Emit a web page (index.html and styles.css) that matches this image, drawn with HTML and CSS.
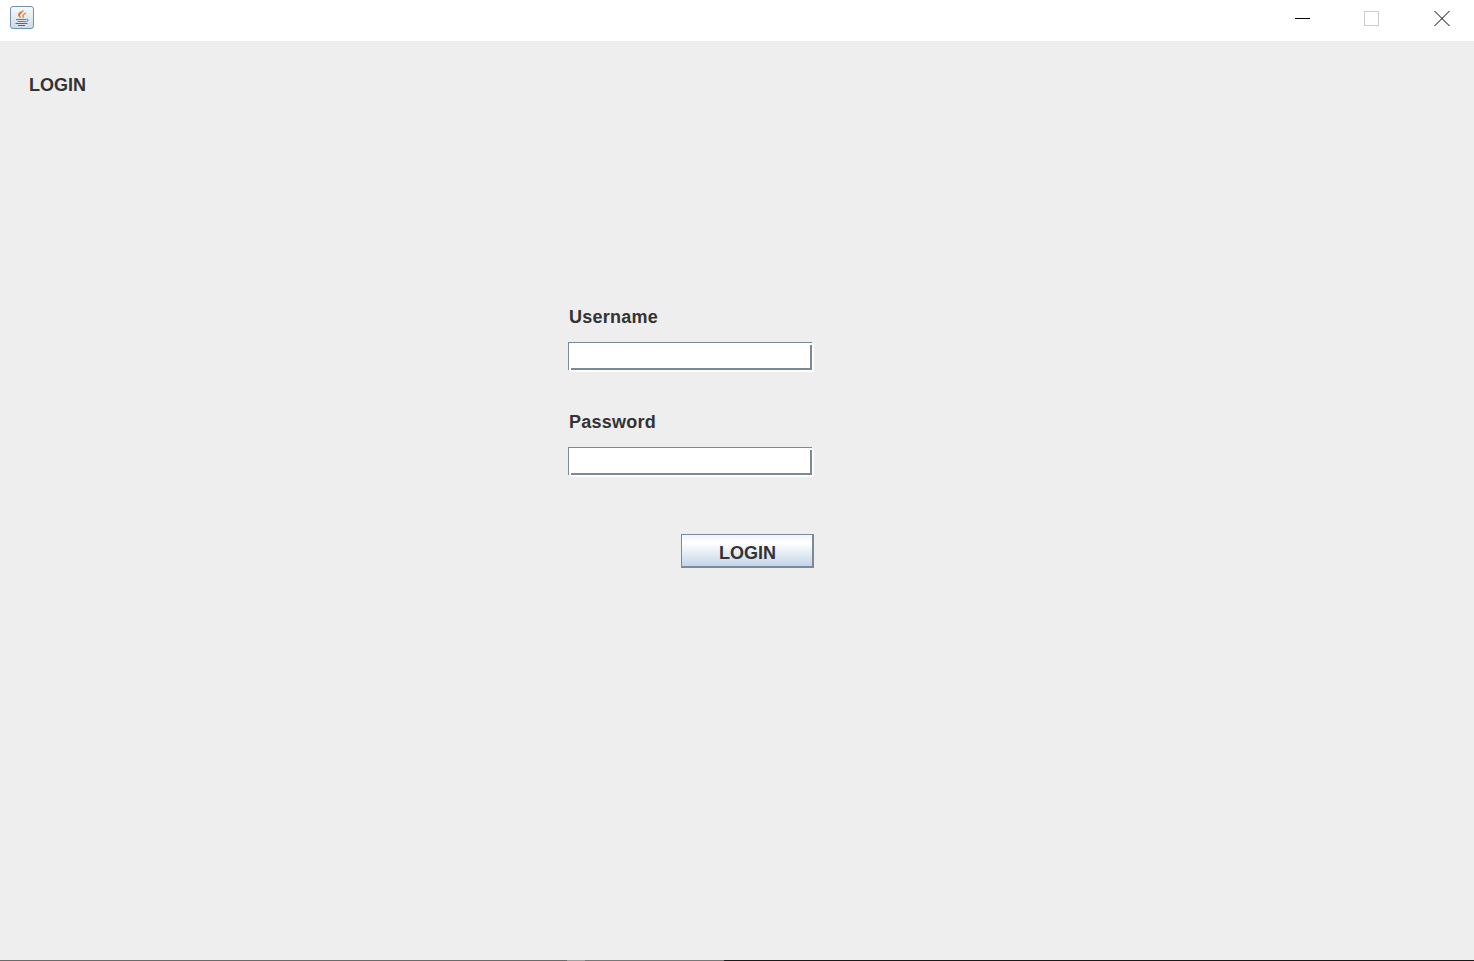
FILE: index.html
```html
<!DOCTYPE html>
<html lang="en">
<head>
    <meta charset="UTF-8">
    <title>Login</title>
    <link rel="stylesheet" href="styles.css">
</head>
<body>
    <!-- Title Bar -->
    <div class="title-bar">
        <svg class="app-icon" width="24" height="23" viewBox="0 0 24 23">
            <defs>
                <linearGradient id="icon-bg" x1="0" y1="0" x2="0" y2="1">
                    <stop offset="0" stop-color="#f8fafc"/>
                    <stop offset="1" stop-color="#cfdbe6"/>
                </linearGradient>
            </defs>
            <rect x="0.5" y="0.5" width="23" height="22" rx="2.5" fill="url(#icon-bg)" stroke="#6f93ad"/>
            <path d="M13.500 3.500c1 2.500-4 3.800-3.300 6.500.2.900.8 1.600 1.400 2.500-2.500-1-4.200-2.800-3.400-5 .8-1.800 4.300-2 5.300-4z" fill="#e5762a"/>
            <path d="M16 7c-1.800.9-3.500 1.700-3 3.500.1.600.4 1 .6 1.500" fill="none" stroke="#ec8d42" stroke-width="1.500"/>
            <path d="M6 13.500h10M7.500 15.500h8c1.300 0 2.700-.4 2.700-1.400 0-.8-1-1-1.800-.9" fill="none" stroke="#55809f" stroke-width="1"/>
            <path d="M5.500 17.500h12M8 19.500h7" fill="none" stroke="#3f7096" stroke-width="1.200"/>
        </svg>
        <div class="window-buttons">
            <svg width="16" height="16" viewBox="0 0 16 16"><path d="M0 8.500h15" stroke="#000"/></svg>
            <svg width="16" height="16" viewBox="0 0 16 16"><rect x="0.500" y="1.500" width="14" height="14" fill="none" stroke="#ccc"/></svg>
            <svg width="18" height="17" viewBox="0 0 18 17"><path d="M1.500 1l15 15M16.500 1l-15 15" stroke="#000" fill="none"/></svg>
        </div>
    </div>

    <!-- Window Content -->
    <div class="content">
        <div class="page-title">LOGIN</div>

        <form class="login-form">
            <label class="field-label" for="username">Username</label>
            <input class="field" id="username" type="text">

            <label class="field-label" for="password">Password</label>
            <input class="field" id="password" type="password">

            <button class="login-btn" type="button">LOGIN</button>
        </form>
    </div>

    <!-- Taskbar edge -->
    <div class="bottom-edge"></div>
</body>
</html>
```

FILE: styles.css
```css
/* General Styles */
body {
    margin: 0;
    height: 961px;
    display: flex;
    flex-direction: column;
    overflow: hidden;
    background: #eeeeee;
    color: #333;
    font-family: "Liberation Sans", Arial, sans-serif;
    font-size: 18px;
    font-weight: bold;
}

/* Title Bar */
.title-bar {
    height: 42px;
    box-sizing: border-box;
    flex-shrink: 0;
    display: flex;
    justify-content: space-between;
    background: #fff;
    border-bottom: 1px solid #ececec;
}

.app-icon {
    margin: 6px 0 0 10px;
}

.window-buttons {
    display: flex;
    gap: 53px;
    padding: 10px 23px 0 0;
}

/* Content */
.content {
    flex: 1;
    padding-top: 33px;
}

.page-title {
    margin-left: 29px;
    line-height: 21px;
}

.login-form {
    width: 246px;
    margin: 211px 0 0 568px;
    display: flex;
    flex-direction: column;
}

.field-label {
    margin: 0 0 14px 1px;
    line-height: 21px;
    letter-spacing: 0.25px;
}

/* Bevelled border: thin top and left, thick right and bottom */
.field {
    width: 244px;
    height: 28px;
    box-sizing: border-box;
    padding: 0 3px;
    margin: 0 0 42px 0;
    border-style: solid;
    border-color: #7a8a99;
    border-width: 1px 0 0 1px;
    border-radius: 0;
    background:
        linear-gradient(#7a8a99, #7a8a99) right bottom / 2px 25px no-repeat,
        linear-gradient(#7a8a99, #7a8a99) right bottom / 241px 2px no-repeat,
        #fff;
    box-shadow: 2px 2px 0 #fff;
    outline: none;
}

.login-btn {
    align-self: flex-end;
    width: 133px;
    height: 34px;
    margin: 17px 0 0 0;
    padding: 5px 0 0 1px;
    font: inherit;
    color: inherit;
    background: linear-gradient(#eef4fa 0%, #ffffff 25%, #c4d5e8 100%);
    border: solid #7a8a99;
    border-width: 1px 2px 2px 1px;
    border-radius: 0;
}

/* Taskbar edge */
.bottom-edge {
    height: 1px;
    flex-shrink: 0;
    background: linear-gradient(to right,
        #6a6a6a 0 567px,
        #a0a0a0 567px 585px,
        #777 585px 724px,
        #1a1a1a 724px);
}
```
